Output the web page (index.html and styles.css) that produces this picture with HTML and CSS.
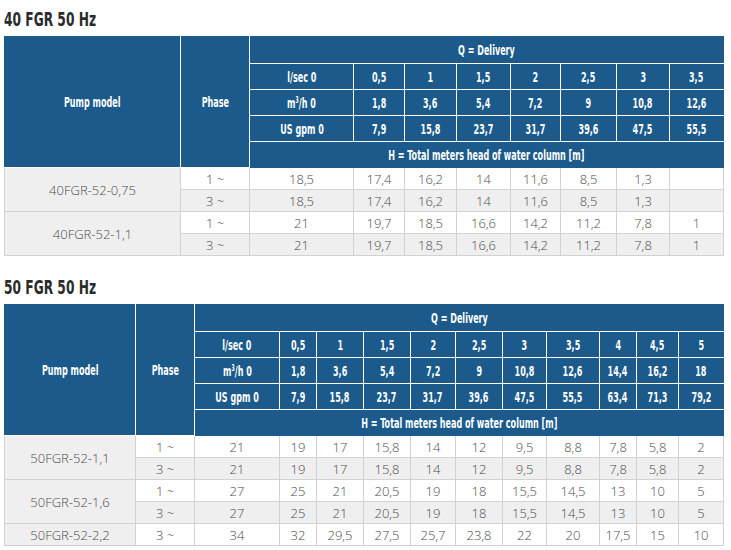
FILE: index.html
```html
<!DOCTYPE html>
<html>
<head>
<meta charset="utf-8">
<link rel="stylesheet" href="styles.css">
</head>
<body>
<h2 class="title"><span class="n">40 FGR 50 Hz</span></h2>
<table class="perf t40">
  <colgroup>
    <col style="width:176px"><col style="width:69px"><col style="width:104px">
    <col style="width:51px"><col style="width:52px"><col style="width:54px"><col style="width:50px">
    <col style="width:56px"><col style="width:53px"><col style="width:54px">
  </colgroup>
  <thead>
    <tr class="hq"><th rowspan="5"><span class="n">Pump model</span></th><th rowspan="5"><span class="n">Phase</span></th><th colspan="8"><span class="n">Q = Delivery</span></th></tr>
    <tr class="hu"><th><span class="n">l/sec 0</span></th><th><span class="n">0,5</span></th><th><span class="n">1</span></th><th><span class="n">1,5</span></th><th><span class="n">2</span></th><th><span class="n">2,5</span></th><th><span class="n">3</span></th><th><span class="n">3,5</span></th></tr>
    <tr class="hu"><th><span class="n">m<sup>3</sup>/h 0</span></th><th><span class="n">1,8</span></th><th><span class="n">3,6</span></th><th><span class="n">5,4</span></th><th><span class="n">7,2</span></th><th><span class="n">9</span></th><th><span class="n">10,8</span></th><th><span class="n">12,6</span></th></tr>
    <tr class="hu"><th><span class="n">US gpm 0</span></th><th><span class="n">7,9</span></th><th><span class="n">15,8</span></th><th><span class="n">23,7</span></th><th><span class="n">31,7</span></th><th><span class="n">39,6</span></th><th><span class="n">47,5</span></th><th><span class="n">55,5</span></th></tr>
    <tr class="hh"><th colspan="8"><span class="n">H = Total meters head of water column [m]</span></th></tr>
  </thead>
  <tbody>
    <tr><td class="model" rowspan="2">40FGR-52-0,75</td><td>1 ~</td><td>18,5</td><td>17,4</td><td>16,2</td><td>14</td><td>11,6</td><td>8,5</td><td>1,3</td><td></td></tr>
    <tr class="alt"><td>3 ~</td><td>18,5</td><td>17,4</td><td>16,2</td><td>14</td><td>11,6</td><td>8,5</td><td>1,3</td><td></td></tr>
    <tr><td class="model" rowspan="2">40FGR-52-1,1</td><td>1 ~</td><td>21</td><td>19,7</td><td>18,5</td><td>16,6</td><td>14,2</td><td>11,2</td><td>7,8</td><td>1</td></tr>
    <tr class="alt"><td>3 ~</td><td>21</td><td>19,7</td><td>18,5</td><td>16,6</td><td>14,2</td><td>11,2</td><td>7,8</td><td>1</td></tr>
  </tbody>
</table>

<h2 class="title second"><span class="n">50 FGR 50 Hz</span></h2>
<table class="perf t50">
  <colgroup>
    <col style="width:131px"><col style="width:59px"><col style="width:85px">
    <col style="width:37px"><col style="width:47px"><col style="width:47px"><col style="width:45px">
    <col style="width:47px"><col style="width:44px"><col style="width:53px"><col style="width:37px">
    <col style="width:42px"><col style="width:45px">
  </colgroup>
  <thead>
    <tr class="hq"><th rowspan="5"><span class="n">Pump model</span></th><th rowspan="5"><span class="n">Phase</span></th><th colspan="11"><span class="n">Q = Delivery</span></th></tr>
    <tr class="hu"><th><span class="n">l/sec 0</span></th><th><span class="n">0,5</span></th><th><span class="n">1</span></th><th><span class="n">1,5</span></th><th><span class="n">2</span></th><th><span class="n">2,5</span></th><th><span class="n">3</span></th><th><span class="n">3,5</span></th><th><span class="n">4</span></th><th><span class="n">4,5</span></th><th><span class="n">5</span></th></tr>
    <tr class="hu"><th><span class="n">m<sup>3</sup>/h 0</span></th><th><span class="n">1,8</span></th><th><span class="n">3,6</span></th><th><span class="n">5,4</span></th><th><span class="n">7,2</span></th><th><span class="n">9</span></th><th><span class="n">10,8</span></th><th><span class="n">12,6</span></th><th><span class="n">14,4</span></th><th><span class="n">16,2</span></th><th><span class="n">18</span></th></tr>
    <tr class="hu"><th><span class="n">US gpm 0</span></th><th><span class="n">7,9</span></th><th><span class="n">15,8</span></th><th><span class="n">23,7</span></th><th><span class="n">31,7</span></th><th><span class="n">39,6</span></th><th><span class="n">47,5</span></th><th><span class="n">55,5</span></th><th><span class="n">63,4</span></th><th><span class="n">71,3</span></th><th><span class="n">79,2</span></th></tr>
    <tr class="hh"><th colspan="11"><span class="n">H = Total meters head of water column [m]</span></th></tr>
  </thead>
  <tbody>
    <tr><td class="model" rowspan="2">50FGR-52-1,1</td><td>1 ~</td><td>21</td><td>19</td><td>17</td><td>15,8</td><td>14</td><td>12</td><td>9,5</td><td>8,8</td><td>7,8</td><td>5,8</td><td>2</td></tr>
    <tr class="alt"><td>3 ~</td><td>21</td><td>19</td><td>17</td><td>15,8</td><td>14</td><td>12</td><td>9,5</td><td>8,8</td><td>7,8</td><td>5,8</td><td>2</td></tr>
    <tr><td class="model" rowspan="2">50FGR-52-1,6</td><td>1 ~</td><td>27</td><td>25</td><td>21</td><td>20,5</td><td>19</td><td>18</td><td>15,5</td><td>14,5</td><td>13</td><td>10</td><td>5</td></tr>
    <tr class="alt"><td>3 ~</td><td>27</td><td>25</td><td>21</td><td>20,5</td><td>19</td><td>18</td><td>15,5</td><td>14,5</td><td>13</td><td>10</td><td>5</td></tr>
    <tr><td class="model">50FGR-52-2,2</td><td>3 ~</td><td>34</td><td>32</td><td>29,5</td><td>27,5</td><td>25,7</td><td>23,8</td><td>22</td><td>20</td><td>17,5</td><td>15</td><td>10</td></tr>
  </tbody>
</table>
</body>
</html>
```

FILE: styles.css
```css
html, body {
  margin: 0;
  padding: 0;
  background: #ffffff;
}
body {
  padding: 0 8px 0 4px;
  font-family: "Open Sans", "Liberation Sans", sans-serif;
}
.n {
  display: inline-block;
  transform: scaleX(0.64);
}
.title {
  margin: 5px 0 2px 0;
  height: 29px;
  line-height: 29px;
  font-family: "DejaVu Sans Condensed", "DejaVu Sans", sans-serif;
  font-stretch: condensed;
  font-weight: bold;
  font-size: 20px;
  color: #2b2b2b;
  white-space: nowrap;
}
.title .n {
  transform: scaleX(0.68);
  transform-origin: left center;
}
.title.second {
  margin-top: 17px;
}
.perf {
  border-collapse: collapse;
  table-layout: fixed;
  width: 719px;
}
.perf th {
  background: #1b5a8a;
  color: #ffffff;
  border: 1px solid #ffffff;
  font-family: "DejaVu Sans Condensed", "DejaVu Sans", sans-serif;
  font-stretch: condensed;
  font-weight: bold;
  font-size: 14px;
  padding: 0;
  text-align: center;
  white-space: nowrap;
}
.perf thead tr:first-child th {
  border-top-color: #1b5a8a;
}
.perf thead tr th:first-child {
  border-left-color: #1b5a8a;
}
.perf thead tr.hq th:last-child,
.perf thead tr.hu th:last-child,
.perf thead tr.hh th:last-child {
  border-right-color: #1b5a8a;
}
.perf thead tr.hu th:first-child {
  border-left-color: #ffffff;
}
.perf thead tr.hh th:first-child {
  border-left-color: #ffffff;
  border-bottom-color: #1b5a8a;
}
.perf tr.hq { height: 27px; }
.perf tr.hu { height: 26px; }
.perf tr.hh { height: 26px; }
.perf th sup {
  font-size: 8px;
  vertical-align: 5px;
  line-height: 0;
}
.perf td {
  border: 1px solid #d2d2d2;
  background: #ffffff;
  color: #4d4d4d;
  font-weight: 300;
  font-size: 13px;
  text-align: center;
  padding: 0;
  height: 21px;
  white-space: nowrap;
}
.perf tr.alt td {
  background: #efefef;
}
.perf td.model {
  background: #efefef;
}
```
